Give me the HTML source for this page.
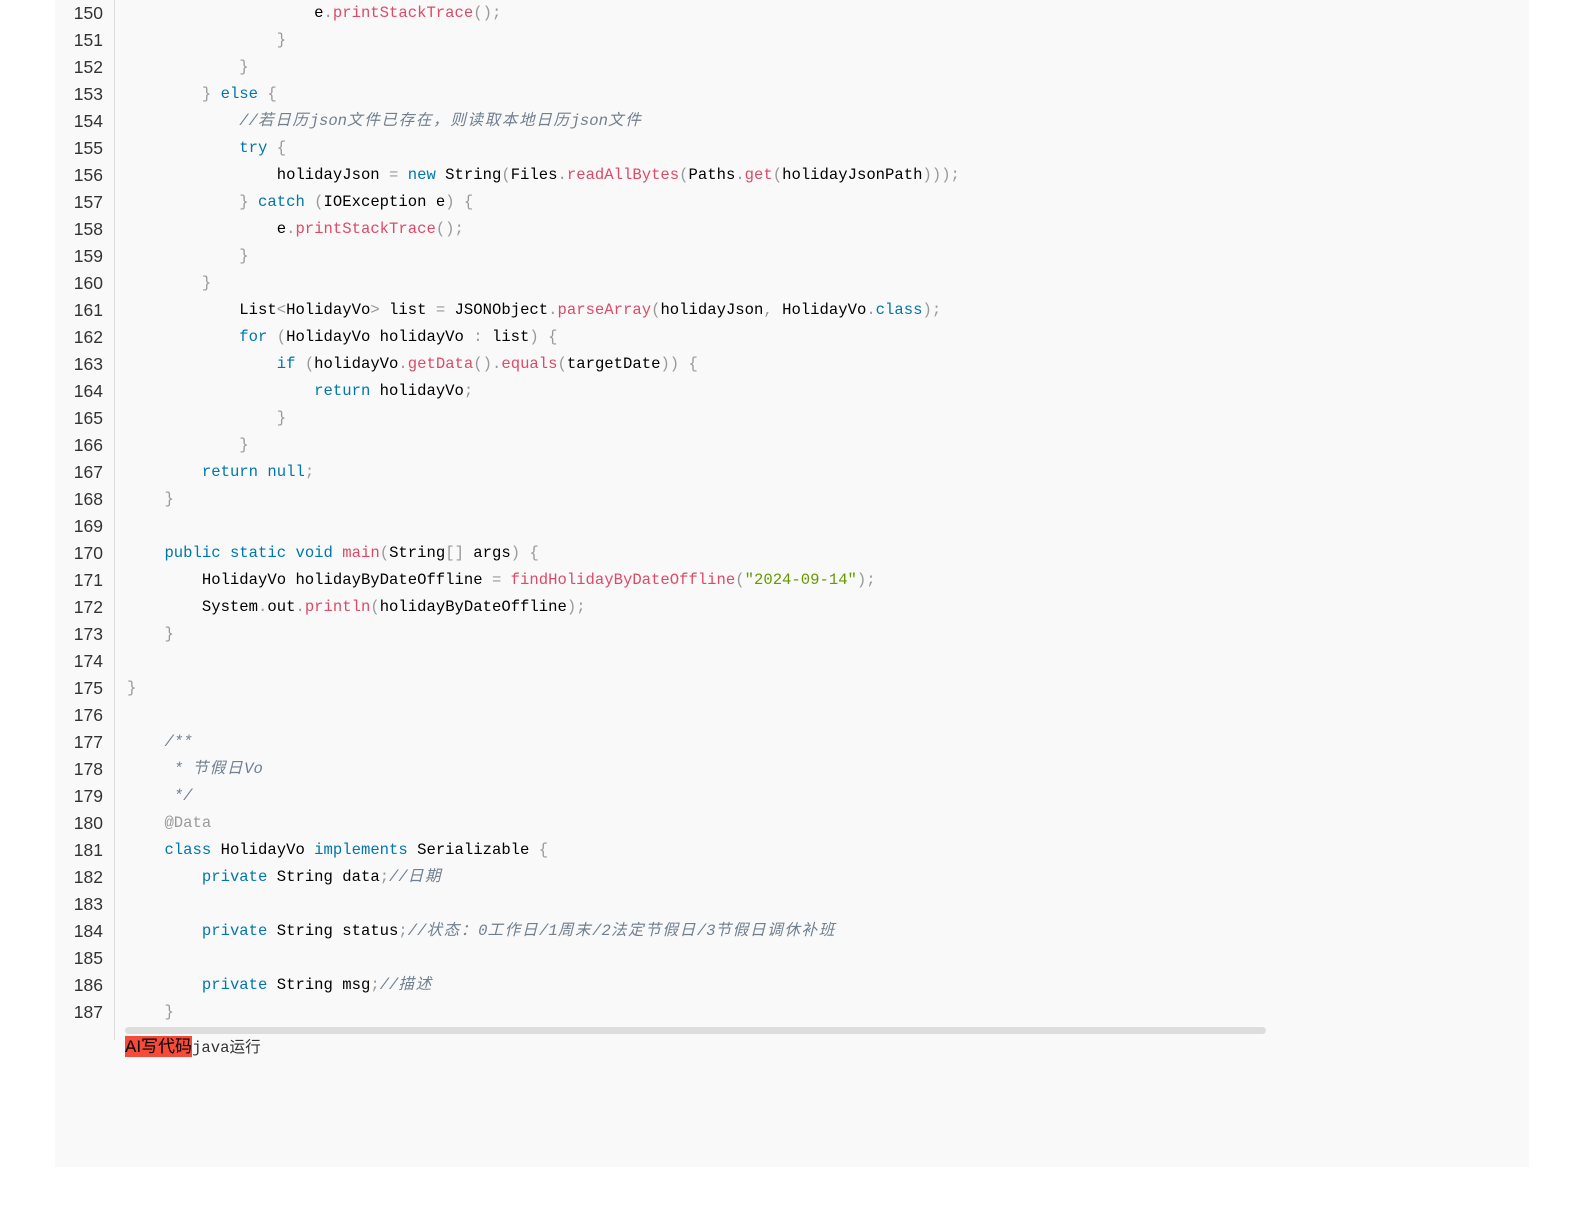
<!DOCTYPE html>
<html><head><meta charset="utf-8"><style>
body{margin:0;background:#fff;width:1587px;height:1225px;overflow:hidden;position:relative}
.box{position:absolute;left:55px;top:0;width:1474px;height:1167px;background:#f9f9f9}
.gut{position:absolute;left:55px;top:0;width:59px;height:1040px;border-right:1px solid #ddd}
.nums{position:absolute;left:55px;top:0;width:48px;text-align:right;font-family:"Liberation Sans","DejaVu Sans",sans-serif;font-size:17.5px;color:#333;line-height:27px}
pre{position:absolute;left:127px;top:0;margin:0;font-family:"Liberation Mono","Noto Sans CJK SC",monospace;font-size:15.6px;line-height:27px;color:#000}
.k{color:#0077aa}.f{color:#dd4a68}.p{color:#999}.c{color:#708090;font-style:italic}.s{color:#669900}
.z{letter-spacing:1.6px}
.sb{position:absolute;left:125px;top:1027px;width:1141px;height:7px;background:#ddd;border-radius:4px}
.ai{position:absolute;left:125px;top:1036px;height:21px;line-height:21px;font-size:17px;font-family:"Liberation Sans","Noto Sans CJK SC",sans-serif}
.ai b{font-weight:normal;background:#f44b3a;color:#000;display:inline-block}
.ai span{font-family:"Liberation Mono","Noto Sans CJK SC",monospace;color:#333;font-size:15.6px}
</style></head><body>
<div class="box"></div><div class="gut"></div>
<div class="nums">150<br>151<br>152<br>153<br>154<br>155<br>156<br>157<br>158<br>159<br>160<br>161<br>162<br>163<br>164<br>165<br>166<br>167<br>168<br>169<br>170<br>171<br>172<br>173<br>174<br>175<br>176<br>177<br>178<br>179<br>180<br>181<br>182<br>183<br>184<br>185<br>186<br>187</div>
<pre>                    e<span class="p">.</span><span class="f">printStackTrace</span><span class="p">();</span>
                <span class="p">}</span>
            <span class="p">}</span>
        <span class="p">}</span> <span class="k">else</span> <span class="p">{</span>
            <span class="c">//<span class="z">若日历</span>json<span class="z">文件已存在，则读取本地日历</span>json<span class="z">文件</span></span>
            <span class="k">try</span> <span class="p">{</span>
                holidayJson <span class="p">=</span> <span class="k">new</span> String<span class="p">(</span>Files<span class="p">.</span><span class="f">readAllBytes</span><span class="p">(</span>Paths<span class="p">.</span><span class="f">get</span><span class="p">(</span>holidayJsonPath<span class="p">)));</span>
            <span class="p">}</span> <span class="k">catch</span> <span class="p">(</span>IOException e<span class="p">)</span> <span class="p">{</span>
                e<span class="p">.</span><span class="f">printStackTrace</span><span class="p">();</span>
            <span class="p">}</span>
        <span class="p">}</span>
            List<span class="p">&lt;</span>HolidayVo<span class="p">&gt;</span> list <span class="p">=</span> JSONObject<span class="p">.</span><span class="f">parseArray</span><span class="p">(</span>holidayJson<span class="p">,</span> HolidayVo<span class="p">.</span><span class="k">class</span><span class="p">);</span>
            <span class="k">for</span> <span class="p">(</span>HolidayVo holidayVo <span class="p">:</span> list<span class="p">)</span> <span class="p">{</span>
                <span class="k">if</span> <span class="p">(</span>holidayVo<span class="p">.</span><span class="f">getData</span><span class="p">().</span><span class="f">equals</span><span class="p">(</span>targetDate<span class="p">))</span> <span class="p">{</span>
                    <span class="k">return</span> holidayVo<span class="p">;</span>
                <span class="p">}</span>
            <span class="p">}</span>
        <span class="k">return</span> <span class="k">null</span><span class="p">;</span>
    <span class="p">}</span>

    <span class="k">public</span> <span class="k">static</span> <span class="k">void</span> <span class="f">main</span><span class="p">(</span>String<span class="p">[]</span> args<span class="p">)</span> <span class="p">{</span>
        HolidayVo holidayByDateOffline <span class="p">=</span> <span class="f">findHolidayByDateOffline</span><span class="p">(</span><span class="s">"2024-09-14"</span><span class="p">);</span>
        System<span class="p">.</span>out<span class="p">.</span><span class="f">println</span><span class="p">(</span>holidayByDateOffline<span class="p">);</span>
    <span class="p">}</span>

<span class="p">}</span>

    <span class="c">/**</span>
<span class="c">     * <span class="z">节假日</span>Vo</span>
<span class="c">     */</span>
    <span class="p">@Data</span>
    <span class="k">class</span> HolidayVo <span class="k">implements</span> Serializable <span class="p">{</span>
        <span class="k">private</span> String data<span class="p">;</span><span class="c">//<span class="z">日期</span></span>

        <span class="k">private</span> String status<span class="p">;</span><span class="c">//<span class="z">状态：</span>0<span class="z">工作日</span>/1<span class="z">周末</span>/2<span class="z">法定节假日</span>/3<span class="z">节假日调休补班</span></span>

        <span class="k">private</span> String msg<span class="p">;</span><span class="c">//<span class="z">描述</span></span>
    <span class="p">}</span></pre>
<div class="sb"></div>
<div class="ai"><b>AI写代码</b><span>java运行</span></div>
</body></html>
